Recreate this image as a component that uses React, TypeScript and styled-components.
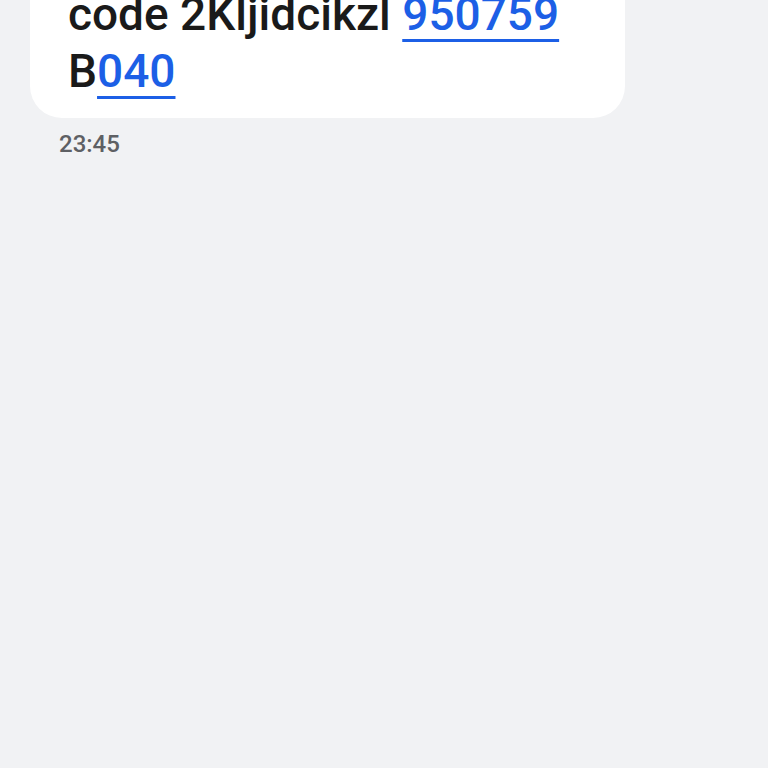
import React from "react";
import styled, { createGlobalStyle } from "styled-components";

const Global = createGlobalStyle`
  html, body { margin: 0; padding: 0; background: #f1f2f4; }
  body { font-family: Roboto, "Noto Sans", sans-serif; overflow: hidden; }
`;

const Page = styled.div`
  width: 768px;
  height: 768px;
  background: #f1f2f4;
  overflow: hidden;
  display: flex;
  flex-direction: column;
  padding: 0 30px;
  box-sizing: border-box;
`;

const Bubble = styled.div`
  width: 595px;
  box-sizing: border-box;
  margin-top: -40px;
  padding: 26px 30px 18px 38px;
  background: #ffffff;
  border-radius: 0 0 32px 32px;
  color: #1a1a1a;
  font-size: 46px;
  font-weight: 500;
  line-height: 57px;
`;

const Code = styled.a`
  color: #1c5fe6;
  text-decoration: underline;
  text-decoration-thickness: 3px;
  text-underline-offset: 8.5px;
`;

const Time = styled.div`
  margin: 11px 0 0 29px;
  font-size: 24px;
  font-weight: 500;
  color: #5e6064;
  line-height: 30px;
`;

export default function App() {
  return (
    <Page>
      <Global />
      <Bubble>
        code 2Kljidcikzl <Code>950759</Code> B<Code>040</Code>
      </Bubble>
      <Time>23:45</Time>
    </Page>
  );
}
